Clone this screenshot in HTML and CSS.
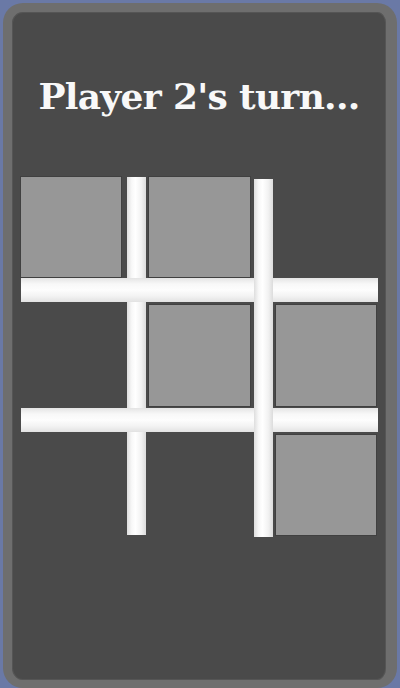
FILE: index.html
```html
<!DOCTYPE html>
<html>
<head>
<meta charset="utf-8">
<link rel="stylesheet" href="styles.css">
</head>
<body>
<div class="card">
  <h1 class="title">Player 2's turn...</h1>
  <div class="board">
    <div class="cell filled c1 r1"></div>
    <div class="cell filled c2 r1"></div>
    <div class="cell c3 r1"></div>
    <div class="cell c1 r2"></div>
    <div class="cell filled c2 r2"></div>
    <div class="cell filled c3 r2"></div>
    <div class="cell c1 r3"></div>
    <div class="cell c2 r3"></div>
    <div class="cell filled c3 r3"></div>
    <div class="vbar vbar1"></div>
    <div class="vbar vbar2"></div>
    <div class="hbar hbar1"></div>
    <div class="hbar hbar2"></div>
  </div>
</div>
</body>
</html>
```
FILE: styles.css
```css
html, body {
  margin: 0;
  padding: 0;
  background: #6a79a6;
  height: 688px;
  overflow: hidden;
}
.card {
  box-sizing: border-box;
  margin: 3px 3px 0 3px;
  height: 685px;
  border-style: solid;
  border-color: #6e6e6e;
  border-width: 9px 11px 8px 9px;
  border-radius: 20px;
  background: #4a4a4a;
  box-shadow: inset 0 0 0 1px #555;
  padding: 0 0 0 9px;
}
.title {
  margin: 0;
  padding-top: 64px;
  padding-right: 9px;
  height: 101px;
  text-align: center;
  font-family: "DejaVu Serif", "Liberation Serif", serif;
  font-weight: bold;
  font-size: 36px;
  line-height: 40px;
  color: #f8f8f8;
  letter-spacing: -0.7px;
}
.board {
  display: grid;
  grid-template-columns: 100px 28px 101px 26px 100px;
  grid-template-rows: 100px 28px 101px 29px 100px;
  width: 355px;
}
.cell.filled {
  background: #979797;
  box-shadow: 0 0 0 1px #404040;
}
.c1 { grid-column: 1; }
.c2 { grid-column: 3; }
.c3 { grid-column: 5; }
.r1 { grid-row: 1; }
.r2 { grid-row: 3; }
.r3 { grid-row: 5; }
.vbar {
  grid-row: 1 / 6;
  width: 19px;
  justify-self: center;
  background: linear-gradient(to right, #dedede 0%, #f8f8f8 25%, #ffffff 45%, #f2f2f2 75%, #dcdcdc 100%);
}
.vbar1 {
  grid-column: 2;
  transform: translateX(1px);
  z-index: 1;
}
.vbar2 {
  grid-column: 4;
  margin-top: 2px;
  margin-bottom: -2px;
  z-index: 3;
}
.hbar {
  grid-column: 1 / 6;
  height: 24px;
  width: 357px;
  z-index: 2;
  background: linear-gradient(to bottom, #e4e4e4 0%, #f8f8f8 25%, #fdfdfd 50%, #f3f3f3 75%, #e2e2e2 100%);
}
.hbar1 {
  grid-row: 2;
  margin-top: 1px;
}
.hbar2 {
  grid-row: 4;
  margin-top: 2px;
}
```
